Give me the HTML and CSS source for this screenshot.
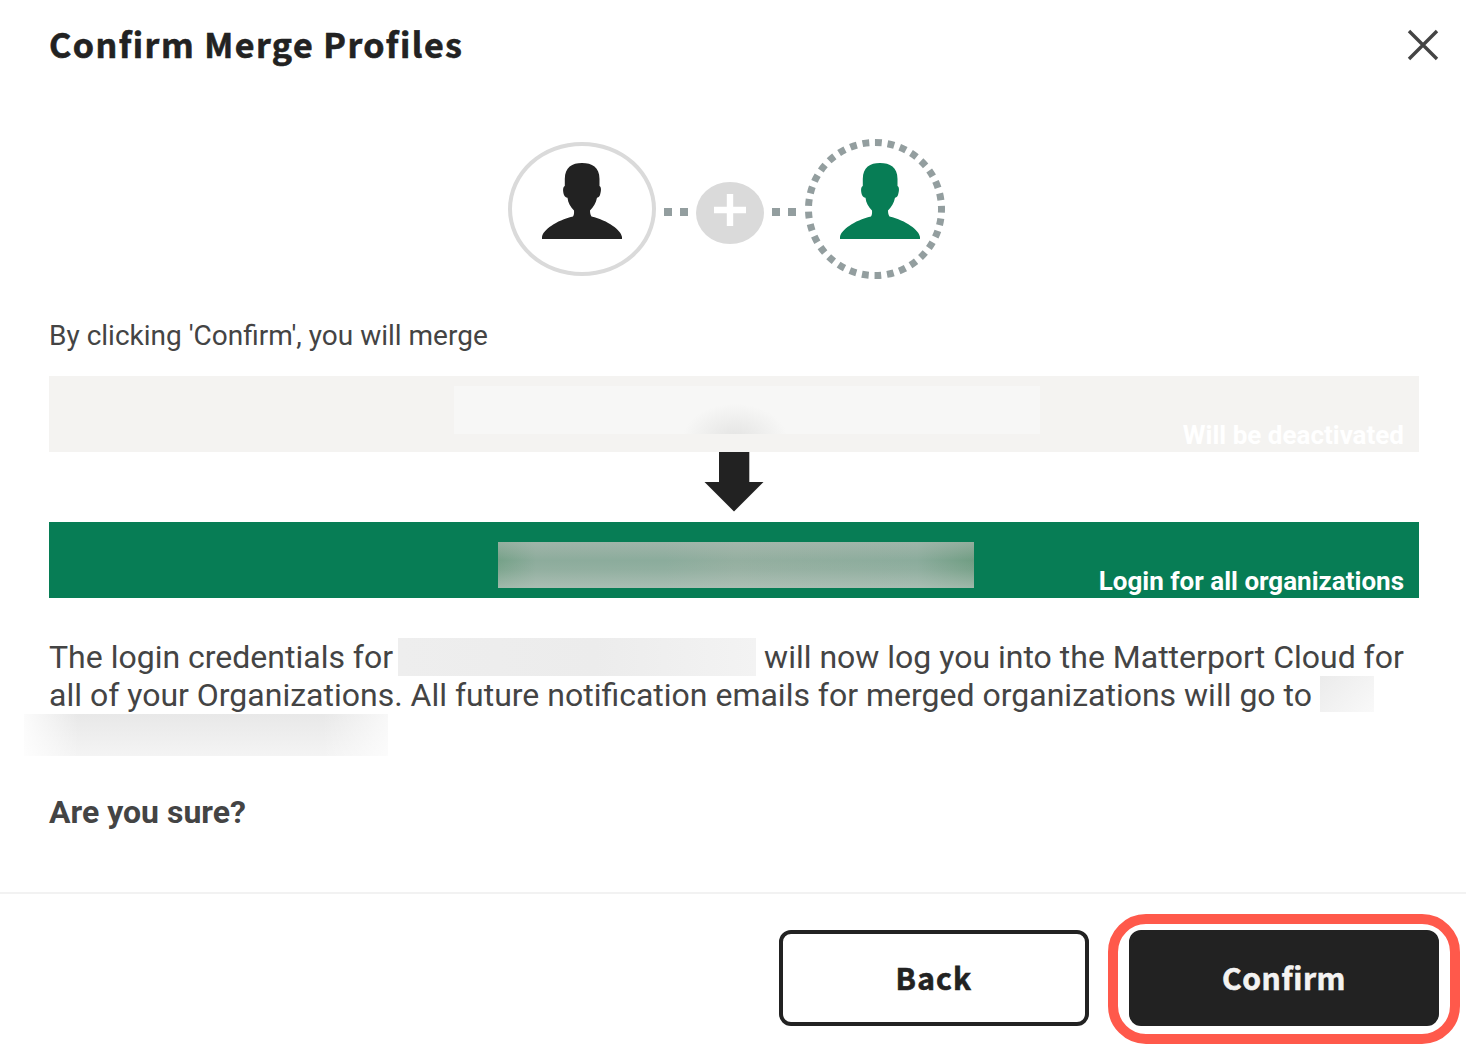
FILE: index.html
```html
<!DOCTYPE html>
<html lang="en">
<head>
    <meta charset="UTF-8">
    <meta name="viewport" content="width=device-width, initial-scale=1.0">
    <title>Confirm Merge Profiles</title>
    <link rel="stylesheet" href="styles.css">
</head>
<body>
<div class="modal">

    <div class="modal-header">
        <h1><span class="title-text">Confirm Merge Profiles</span></h1>
        <button class="close" aria-label="Close">
            <svg width="32" height="32" viewBox="0 0 32 32">
                <path d="M2 2L30 30M30 2L2 30" fill="none" stroke="#444" stroke-width="3.4"/>
            </svg>
        </button>
    </div>

    <div class="modal-body">
        <!-- Profile A + Profile B -->
        <div class="profiles">
            <div class="profile source">
                <svg class="person" width="80" height="76" viewBox="0 0 80 76">
                    <path d="M40 0C50 0 57.500 4 57.500 16L57.500 23C59.500 24 59.300 28 58 32C57.300 34 56 34.500 55 34.700C54 40 51.500 44 48 47.500C48 50 48.500 52 49.500 53.500C66 57.500 79 67 80 74L80 76L0 76L0 74C1 67 14 57.500 31 53.500C32 52 32.200 50 32 47.500C28.500 44 26 40 25.500 34.700C24 34.500 23 34 22 32C20.700 28 20.700 24 22.800 23L22.800 16C23 4 30 0 40 0Z"/>
                </svg>
            </div>
            <div class="dots"><i></i><i></i></div>
            <div class="plus">
                <svg width="32" height="32" viewBox="0 0 32 32">
                    <path d="M16 0V32M0 16H32" fill="none" stroke="#fff" stroke-width="6.400"/>
                </svg>
            </div>
            <div class="dots"><i></i><i></i></div>
            <div class="profile target">
                <svg class="ring" width="140" height="140" viewBox="0 0 140 140">
                    <circle cx="70" cy="70" r="66.500" pathLength="330" transform="rotate(-2.700 70 70)"/>
                </svg>
                <svg class="person" width="80" height="76" viewBox="0 0 80 76">
                    <path d="M40 0C50 0 57.500 4 57.500 16L57.500 23C59.500 24 59.300 28 58 32C57.300 34 56 34.500 55 34.700C54 40 51.500 44 48 47.500C48 50 48.500 52 49.500 53.500C66 57.500 79 67 80 74L80 76L0 76L0 74C1 67 14 57.500 31 53.500C32 52 32.200 50 32 47.500C28.500 44 26 40 25.500 34.700C24 34.500 23 34 22 32C20.700 28 20.700 24 22.800 23L22.800 16C23 4 30 0 40 0Z"/>
                </svg>
            </div>
        </div>

        <p class="intro"><span class="intro-text">By clicking 'Confirm', you will merge</span></p>

        <div class="account old">
            <span class="hidden-mail"></span>
            <span class="note">Will be deactivated</span>
        </div>
        <div class="arrow">
            <svg width="60" height="60" viewBox="0 0 60 60">
                <path d="M15 0H45.300V30H59.500L30 59.500L.5 30H15Z" fill="#222"/>
            </svg>
        </div>
        <div class="account new">
            <span class="hidden-mail"></span>
            <span class="note">Login for all organizations</span>
        </div>

        <div class="details">
            <div class="line"><span class="t1">The login credentials for</span><span class="blank blank1"></span><span class="t2">will now log you into the Matterport Cloud for</span></div>
            <div class="line"><span class="t3">all of your Organizations. All future notification emails for merged organizations will go to</span><span class="blank blank2"></span></div>
            <div class="line"><span class="blank blank3"></span></div>
        </div>

        <p class="sure"><span>Are you sure?</span></p>
    </div>

    <div class="modal-footer">
        <button class="btn back"><span>Back</span></button>
        <div class="highlight">
            <button class="btn confirm"><span>Confirm</span></button>
        </div>
    </div>

</div>
</body>
</html>
```
FILE: styles.css
```css
* {
    box-sizing: border-box;
}

body {
    margin: 0;
    background: #fff;
    color: #444;
    font-family: Roboto, "Liberation Sans", sans-serif;
}

.modal {
    display: flex;
    flex-direction: column;
    height: 1056px;
    overflow: hidden;
}

.modal-header {
    display: flex;
    justify-content: space-between;
    align-items: center;
    height: 90px;
    padding: 0 27px 0 49px;
}

h1 {
    margin: 0 0 3px;
    font-family: "Noto Sans CJK JP", "Open Sans", sans-serif;
    font-size: 34px;
    line-height: 50px;
    font-weight: 700;
    letter-spacing: 1.45px;
    -webkit-text-stroke: .6px #222;
    color: #222;
}

.close {
    display: flex;
    padding: 0;
    border: none;
    background: none;
    cursor: pointer;
}

.modal-body {
    height: 802px;
    padding: 49px 47px 0 49px;
}

/* Profiles */
.profiles {
    display: flex;
    justify-content: center;
    align-items: center;
    gap: 8px;
    height: 140px;
    margin-right: 15px;
}

.profile {
    display: flex;
    justify-content: center;
}

.source {
    width: 148px;
    height: 134px;
    padding-top: 17px;
    border: 4px solid #dadada;
    border-radius: 50%;
    fill: #222;
}

.target {
    position: relative;
    width: 140px;
    height: 140px;
    padding: 24px 0 0 9px;
    margin-left: 1px;
    fill: #077d55;
}

.ring {
    position: absolute;
    top: 0;
    left: 0;
    fill: none;
    stroke: #939e9f;
    stroke-width: 7;
    stroke-dasharray: 5.4 4.6;
}

.dots {
    display: flex;
    gap: 8px;
    margin-top: 6px;
}

.dots i {
    width: 8px;
    height: 8px;
    background: #939e9f;
}

.plus {
    display: flex;
    justify-content: center;
    width: 68px;
    height: 62px;
    margin-top: 8px;
    padding-top: 12px;
    border-radius: 50%;
    background: #dadada;
}

.intro {
    margin: 37px 0 0;
    height: 60px;
    font-size: 28px;
    line-height: 40px;
}

/* Accounts */
.account {
    display: grid;
    grid-template-columns: 1fr;
    height: 76px;
    color: #fff;
}

.account > * {
    grid-area: 1 / 1;
}

.old {
    background: #f4f3f1;
}

.new {
    background: #077d55;
}

.note {
    justify-self: end;
    align-self: end;
    margin: 0 15px 1px 0;
    font-size: 26px;
    line-height: 32px;
    font-weight: 700;
}

.old .hidden-mail {
    width: 586px;
    height: 48px;
    margin: 10px 0 0 405px;
    background: radial-gradient(ellipse 52px 34px at 281px 52px, #e4e4e3, rgba(247, 247, 246, 0)), #f7f7f6;
}

.new .hidden-mail {
    width: 476px;
    height: 46px;
    margin: 20px 0 0 449px;
    background:
        linear-gradient(rgba(180, 190, 183, .5), rgba(150, 175, 160, 0) 40%, rgba(180, 195, 186, .15) 60%, rgba(190, 202, 195, .6)),
        linear-gradient(90deg, #75a188, #8dac9c 8%, #8bac9c 35%, #94afa0 50%, #8bac9c 88%, #709d83);
}

.arrow {
    display: flex;
    justify-content: center;
    height: 70px;
}

/* Text */
.details {
    padding-top: 40px;
    font-size: 32px;
    line-height: 38px;
}

.line {
    display: flex;
    height: 38px;
    white-space: nowrap;
}

.blank1 {
    width: 358px;
    height: 38px;
    margin: 0 8px 0 5px;
    background: linear-gradient(90deg, #eee, #ececec 55%, #f3f3f3);
}

.blank2 {
    width: 54px;
    height: 36px;
    margin-left: 8px;
    background: linear-gradient(135deg, #ebebeb, #f9f9f9);
}

.blank3 {
    width: 364px;
    height: 42px;
    margin-left: -25px;
    background:
        linear-gradient(90deg, rgba(255, 255, 255, .85), rgba(255, 255, 255, 0) 15%, rgba(255, 255, 255, 0) 82%, rgba(255, 255, 255, .7)),
        linear-gradient(#e8e8e8, #f4f4f4);
}

.sure {
    margin: 41px 0 0;
    font-size: 32px;
    line-height: 38px;
    font-weight: 700;
}

/* Footer */
.modal-footer {
    display: flex;
    justify-content: flex-end;
    align-items: flex-start;
    gap: 19px;
    height: 164px;
    padding: 20px 6px 0 0;
    border-top: 2px solid #f2f2f2;
}

.btn {
    width: 310px;
    height: 96px;
    padding: 0 0 2px;
    border: 4px solid #222;
    border-radius: 12px;
    font-family: "Noto Sans CJK JP", "Open Sans", sans-serif;
    font-size: 30px;
    line-height: 44px;
    font-weight: 700;
    -webkit-text-stroke: .6px currentColor;
    cursor: pointer;
}

.back {
    margin-top: 16px;
    background: #fff;
    color: #222;
    letter-spacing: 1.2px;
}

.confirm {
    background: #222;
    color: #f4f3f2;
    letter-spacing: .6px;
}

.highlight {
    width: 352px;
    height: 130px;
    padding: 6px 11px;
    border: 10px solid #ff594b;
    border-radius: 38px;
}
```
